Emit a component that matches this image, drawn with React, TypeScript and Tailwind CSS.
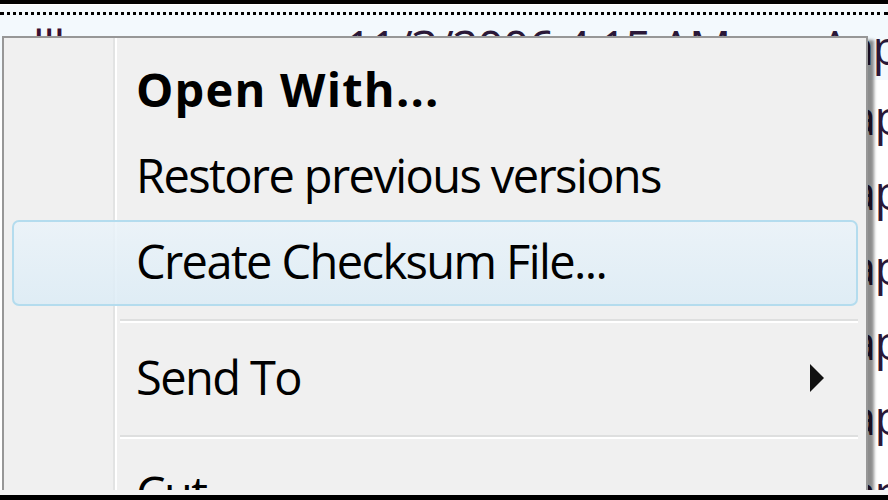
import React from 'react';

// Zoomed Vista-style context menu over an Explorer file list
const listRows = ['ap', 'ap', 'ap', 'ap', 'ap', 'ap', 'ap'];

function Separator() {
  return (
    <div className="h-[30px] flex items-center pl-[116px] pr-[8px]">
      <div className="w-full h-[4px] border-t-2 border-b-2 border-t-[#dedfdf] border-b-white" />
    </div>
  );
}

function MenuItem({ label, bold, active, submenu }: { label: string; bold?: boolean; active?: boolean; submenu?: boolean }) {
  return (
    <div
      className={`h-[86px] flex items-center pb-[3px] ${active ? 'mx-[8px] rounded-[7px] border-2 border-[#b4dcee] bg-[linear-gradient(to_bottom,rgba(234,243,249,0.85),rgba(220,236,246,0.85))] pl-[122px] pr-[30px]' : 'pl-[132px] pr-[38px]'}`}
    >
      <span
        className={`flex-1 text-[47px] leading-none text-black ${bold ? 'font-bold tracking-[1.2px]' : 'font-normal tracking-[-1.6px]'}`}
      >
        {label}
      </span>
      {submenu && (
        <svg width="18" height="32" viewBox="0 0 18 32" className="mr-[2px]">
          <polygon points="2,2 16,16 2,30" fill="#111" />
        </svg>
      )}
    </div>
  );
}

export default function App() {
  return (
    <div
      className="w-[888px] h-[500px] overflow-hidden flex flex-col bg-white"
      style={{ fontFamily: '"Open Sans", "Noto Sans", sans-serif' }}
    >
      <div className="h-[4px] bg-black shrink-0" />

      <div className="relative flex-1 overflow-hidden bg-white">
        {/* File list behind the menu */}
        <div className="flex flex-col pt-[1px]">
          {listRows.map((t, i) => (
            <div
              key={i}
              className={`h-[75px] shrink-0 flex text-[47px] tracking-[-1.6px] leading-[75px] text-[#2a1838] ${i === 0 ? 'bg-[#f3f9fd]' : ''}`}
            >
              <div className={`w-full flex ${i === 0 ? 'border-t-[3px] border-dotted border-black mt-[7px] -mb-[10px] leading-[65px]' : ''}`}>
                {i === 0 ? (
                  <>
                    <span className="w-[345px] shrink-0 pl-[16px] text-[#3a1030]">dll</span>
                    <span className="w-[475px] shrink-0 whitespace-nowrap">11/3/2006 4:15 AM</span>
                    <span className="w-[28px] shrink-0">A</span>
                  </>
                ) : (
                  <span className="w-[850px] shrink-0" />
                )}
                <span className="shrink-0 whitespace-nowrap">{t}</span>
              </div>
            </div>
          ))}
        </div>

        {/* Context menu */}
        <div className="absolute left-[2px] top-[32px] w-[866px] h-[480px] border-2 border-[#979797] bg-[#f0f0f0] shadow-[6px_4px_3px_rgba(0,0,0,0.45)] bg-[linear-gradient(to_right,transparent_109px,#e2e3e3_109px,#e2e3e3_111px,#ffffff_111px,#ffffff_113px,transparent_113px)]">
          <div className="flex flex-col pt-[10px]">
            <MenuItem label="Open With..." bold />
            <MenuItem label="Restore previous versions" />
            <MenuItem label="Create Checksum File..." active />
            <Separator />
            <MenuItem label="Send To" submenu />
            <Separator />
            <MenuItem label="Cut" />
          </div>
        </div>
      </div>

      <div className="h-[5px] bg-[#f4f4f4] shrink-0" />
      <div className="h-[5px] bg-black shrink-0" />
    </div>
  );
}
